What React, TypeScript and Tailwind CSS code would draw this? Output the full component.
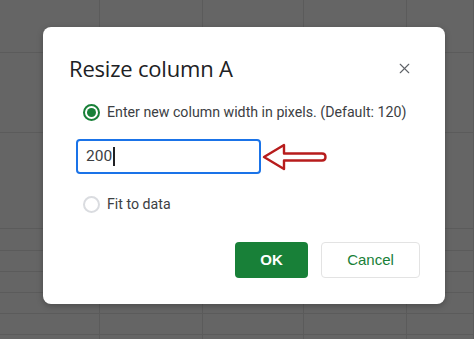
import { X } from "lucide-react";

const cols = ["w-[100px]", "w-[103px]", "w-[101px]", "w-[103px]", "flex-1"];
const rows = ["h-[53px]", "h-[80px]", "h-[96px]", "h-[22px]", "h-[21px]", "h-[21px]", "h-[21px]", "h-[21px]", "h-[21px]"];

function SheetBackdrop() {
  // grid of the sheet behind the dialog, dimmed
  return (
    <div className="flex h-[339px] w-[474px] flex-col overflow-hidden bg-[#656565]">
      {rows.map((h, r) => (
        <div key={r} className={`flex shrink-0 border-b border-[#5b5b5b] ${h}`}>
          {cols.map((w, c) => (
            <div key={c} className={`shrink-0 border-r border-[#5b5b5b] ${w}`} />
          ))}
        </div>
      ))}
    </div>
  );
}

function Radio({ checked }: { checked?: boolean }) {
  return checked ? (
    <span className="flex h-[17px] w-[17px] items-center justify-center rounded-full border-2 border-[#188038]">
      <span className="h-[9px] w-[9px] rounded-full bg-[#188038]" />
    </span>
  ) : (
    <span className="h-[17px] w-[17px] rounded-full border-2 border-[#dadce0]" />
  );
}

function Arrow() {
  return (
    <svg width="66" height="28" viewBox="0 0 66 28" className="ml-[1px]">
      <path
        d="M2 14 L22 2 L22 10.5 L60 10.5 Q63.5 10.5 63.5 14 Q63.5 17.5 60 17.5 L22 17.5 L22 26 Z"
        fill="white"
        stroke="#b71c1c"
        strokeWidth="2.4"
        strokeLinejoin="round"
      />
    </svg>
  );
}

export default function App() {
  return (
    <div className="relative h-[339px] w-[474px] overflow-hidden font-['Roboto',sans-serif]">
      <SheetBackdrop />
      <div className="absolute left-[43px] top-[27px] flex h-[277px] w-[402px] flex-col rounded-[8px] bg-white shadow-[0_2px_6px_rgba(0,0,0,0.25)]">
        <div className="flex items-center justify-between pl-[26px] pr-[32px] pt-[26px]">
          <h2 className="font-['Open_Sans',sans-serif] text-[22px] leading-[30px] tracking-[-0.2px] text-[#202124]">
            Resize column A
          </h2>
          <X className="h-[17px] w-[17px] text-[#5f6368]" strokeWidth={1.6} />
        </div>

        <label className="mt-[19px] flex items-center gap-[7px] pl-[40px] text-[14.2px] text-[#3c4043]">
          <Radio checked />
          Enter new column width in pixels. (Default: 120)
        </label>

        <div className="mt-[16px] flex items-center pl-[33px]">
          <div className="flex h-[35px] w-[185px] items-center rounded-[4px] border-2 border-[#1a73e8] px-[8px] text-[15.5px] text-[#3c4043]">
            200
            <span className="ml-[1px] h-[19px] w-[1.5px] bg-[#202124]" />
          </div>
          <Arrow />
        </div>

        <label className="mt-[20px] flex items-center gap-[7px] pl-[40px] text-[14.2px] text-[#3c4043]">
          <Radio />
          Fit to data
        </label>

        <div className="mt-auto flex justify-end gap-[13px] pb-[26px] pr-[25px]">
          <button className="h-[36px] w-[73px] rounded-[4px] bg-[#188038] font-['Liberation_Sans',sans-serif] text-[15px] font-bold text-white">
            OK
          </button>
          <button className="h-[36px] w-[99px] rounded-[4px] border border-[#e3e3e3] bg-white font-['Liberation_Sans',sans-serif] text-[15px] text-[#188038]">
            Cancel
          </button>
        </div>
      </div>
    </div>
  );
}
